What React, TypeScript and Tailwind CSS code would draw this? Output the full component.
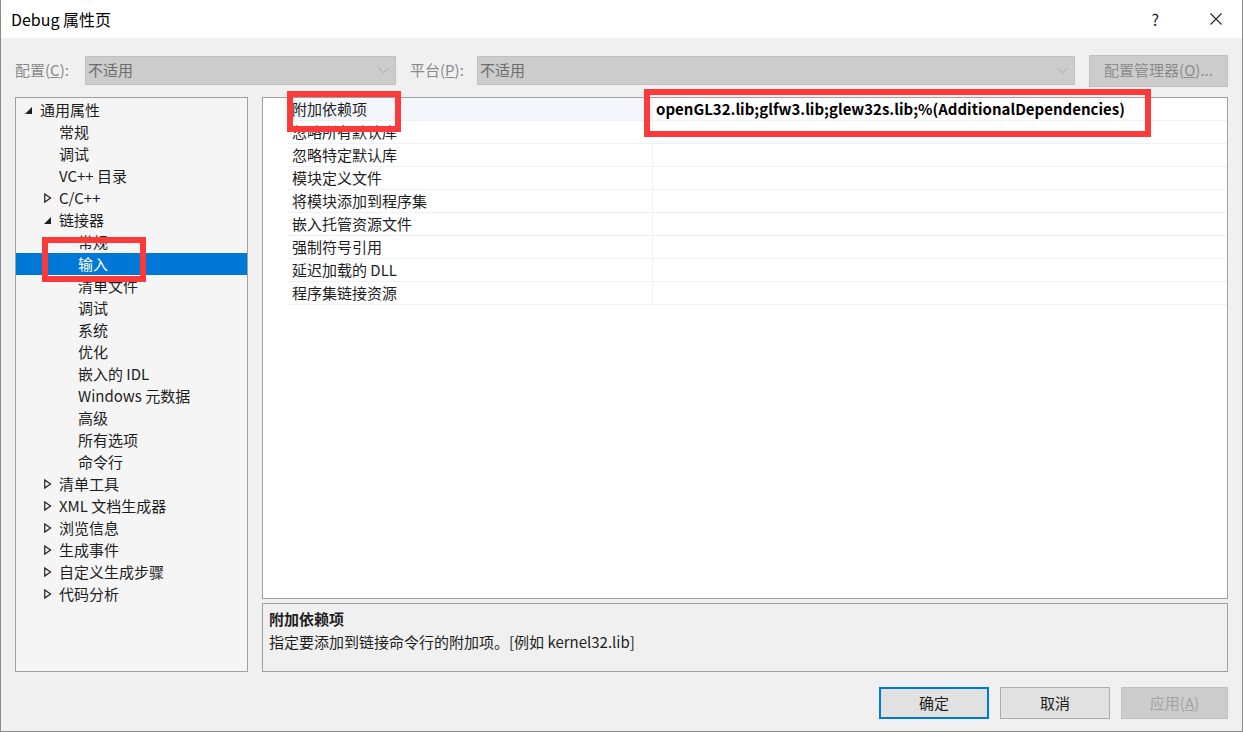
import type { ReactNode } from 'react'

const FONT = { fontFamily: '"Noto Sans CJK SC", "Noto Sans", sans-serif' }

type TreeItem = {
  label: string
  level: number
  state?: 'open' | 'closed'
  selected?: boolean
}

const TREE: TreeItem[] = [
  { label: '通用属性', level: 0, state: 'open' },
  { label: '常规', level: 1 },
  { label: '调试', level: 1 },
  { label: 'VC++ 目录', level: 1 },
  { label: 'C/C++', level: 1, state: 'closed' },
  { label: '链接器', level: 1, state: 'open' },
  { label: '常规', level: 2 },
  { label: '输入', level: 2, selected: true },
  { label: '清单文件', level: 2 },
  { label: '调试', level: 2 },
  { label: '系统', level: 2 },
  { label: '优化', level: 2 },
  { label: '嵌入的 IDL', level: 2 },
  { label: 'Windows 元数据', level: 2 },
  { label: '高级', level: 2 },
  { label: '所有选项', level: 2 },
  { label: '命令行', level: 2 },
  { label: '清单工具', level: 1, state: 'closed' },
  { label: 'XML 文档生成器', level: 1, state: 'closed' },
  { label: '浏览信息', level: 1, state: 'closed' },
  { label: '生成事件', level: 1, state: 'closed' },
  { label: '自定义生成步骤', level: 1, state: 'closed' },
  { label: '代码分析', level: 1, state: 'closed' },
]

const PROPS: { name: string; value?: string }[] = [
  { name: '附加依赖项', value: 'openGL32.lib;glfw3.lib;glew32s.lib;%(AdditionalDependencies)' },
  { name: '忽略所有默认库' },
  { name: '忽略特定默认库' },
  { name: '模块定义文件' },
  { name: '将模块添加到程序集' },
  { name: '嵌入托管资源文件' },
  { name: '强制符号引用' },
  { name: '延迟加载的 DLL' },
  { name: '程序集链接资源' },
]

const INDENT: Record<number, string> = { 0: 'pl-[9px]', 1: 'pl-[28px]', 2: 'pl-[47px]' }

function Expander({ state, light }: { state?: 'open' | 'closed'; light?: boolean }) {
  const c = light ? '#ffffff' : '#1e1e1e'
  return (
    <span className="flex h-full w-[15px] shrink-0 items-center">
      {state === 'open' && (
        <svg width="7" height="7" viewBox="0 0 7 7">
          <path d="M7 0 L7 7 L0 7 Z" fill={c} />
        </svg>
      )}
      {state === 'closed' && (
        <svg width="8" height="10" viewBox="0 0 8 10">
          <path d="M0.75 0.9 L6.6 5 L0.75 9.1 Z" fill="none" stroke={c} strokeWidth="1.2" />
        </svg>
      )}
    </span>
  )
}

function Combo({ text, className }: { text: string; className: string }) {
  return (
    <div
      className={`flex h-[29px] items-center justify-between border border-[#bfbfbf] bg-[#cccccc] pl-[2px] pr-[6px] text-[15px] text-[#6d6d6d] ${className}`}
    >
      <span>{text}</span>
      <svg width="11" height="7" viewBox="0 0 11 7">
        <path d="M0.5 0.8 L5.5 5.8 L10.5 0.8" fill="none" stroke="#a8a8a8" strokeWidth="1" />
      </svg>
    </div>
  )
}

function Btn({ children, variant, w }: { children: ReactNode; variant: 'default' | 'normal' | 'disabled'; w: string }) {
  const cls =
    variant === 'default'
      ? 'border-2 border-[#0078d7] bg-[#e1e1e1] text-[#1e1e1e]'
      : variant === 'normal'
        ? 'border border-[#adadad] bg-[#e1e1e1] text-[#1e1e1e]'
        : 'border border-[#bfbfbf] bg-[#cccccc] text-[#a3a3a3]'
  return <div className={`flex h-[32px] items-center justify-center text-[15px] ${w} ${cls}`}>{children}</div>
}

function RedBox({ className }: { className: string }) {
  return <div className={`pointer-events-none absolute border-[6px] border-[#fd3a3a] ${className}`} />
}

export default function App() {
  return (
    <div
      className="relative flex h-[732px] w-[1243px] flex-col overflow-hidden border-x border-b border-[#8a8a8a] bg-[#f0f0f0] text-[#1e1e1e]"
      style={FONT}
    >
      {/* title bar */}
      <div className="flex h-[38px] shrink-0 items-center bg-white pl-[10px] pr-[20px]">
        <span className="text-[16px] text-black">Debug 属性页</span>
        <span className="ml-auto mr-[51px] text-[16px] text-[#222]">?</span>
        <svg width="12" height="12" viewBox="0 0 12 12">
          <path d="M0.5 0.5 L11.5 11.5 M11.5 0.5 L0.5 11.5" stroke="#222" strokeWidth="1.1" />
        </svg>
      </div>

      {/* configuration row */}
      <div className="mt-[16px] flex h-[33px] shrink-0 items-center pl-[14px] pr-[14px] text-[15px]">
        <span className="w-[70px] text-[#8a8a8a]">
          配置(<span className="underline">C</span>):
        </span>
        <Combo text="不适用" className="w-[311px]" />
        <span className="ml-[14px] w-[67px] text-[#8a8a8a]">
          平台(<span className="underline">P</span>):
        </span>
        <Combo text="不适用" className="w-[598px]" />
        <div className="ml-auto flex h-[32px] w-[139px] items-center justify-center border border-[#bfbfbf] bg-[#cccccc] text-[#8c8c8c]">
          配置管理器(<span className="underline">O</span>)...
        </div>
      </div>

      {/* body */}
      <div className="mt-[10px] flex h-[575px] shrink-0 pl-[14px]">
        <div className="w-[233px] border border-[#a0a0a0] bg-[#f5f5f5] pt-[1px]">
          {TREE.map((t, i) => (
            <div
              key={i}
              className={`flex h-[22px] items-center text-[15px] ${INDENT[t.level]} ${t.selected ? 'bg-[#0078d7] text-white' : ''}`}
            >
              <Expander state={t.state} light={t.selected} />
              <span className="whitespace-nowrap">{t.label}</span>
            </div>
          ))}
        </div>

        <div className="ml-[14px] flex w-[966px] flex-col">
          <div className="h-[502px] border border-[#a0a0a0] bg-white">
            {PROPS.map((p, i) => (
              <div key={i} className="flex h-[23px]">
                <div className="w-[25px] shrink-0" />
                <div
                  className={`flex w-[365px] shrink-0 items-center border-b border-r border-[#eef1f6] pl-[4px] text-[15px] ${i === 0 ? 'bg-[#f3f6fb]' : ''}`}
                >
                  {p.name}
                </div>
                <div className="flex flex-1 items-center border-b border-[#eef1f6] pl-[3px] text-[15px] font-bold text-black">
                  {p.value}
                </div>
              </div>
            ))}
          </div>
          <div className="mt-[4px] h-[69px] border border-[#a0a0a0] bg-[#f0f0f0] pl-[6px] pt-[3px]">
            <div className="text-[15px] font-bold leading-[24px]">附加依赖项</div>
            <div className="text-[15px] leading-[22px]">指定要添加到链接命令行的附加项。[例如 kernel32.lib]</div>
          </div>
        </div>
      </div>

      {/* footer buttons */}
      <div className="mt-[15px] flex shrink-0 justify-end gap-[11px] pr-[14px]">
        <Btn variant="default" w="w-[110px]">确定</Btn>
        <Btn variant="normal" w="w-[110px]">取消</Btn>
        <Btn variant="disabled" w="w-[107px]">
          应用(<span className="underline">A</span>)
        </Btn>
      </div>

      {/* annotation boxes */}
      <RedBox className="left-[286px] top-[91px] h-[41px] w-[114px]" />
      <RedBox className="left-[643px] top-[89px] h-[48px] w-[507px]" />
      <RedBox className="left-[41px] top-[237px] h-[45px] w-[104px]" />
    </div>
  )
}
